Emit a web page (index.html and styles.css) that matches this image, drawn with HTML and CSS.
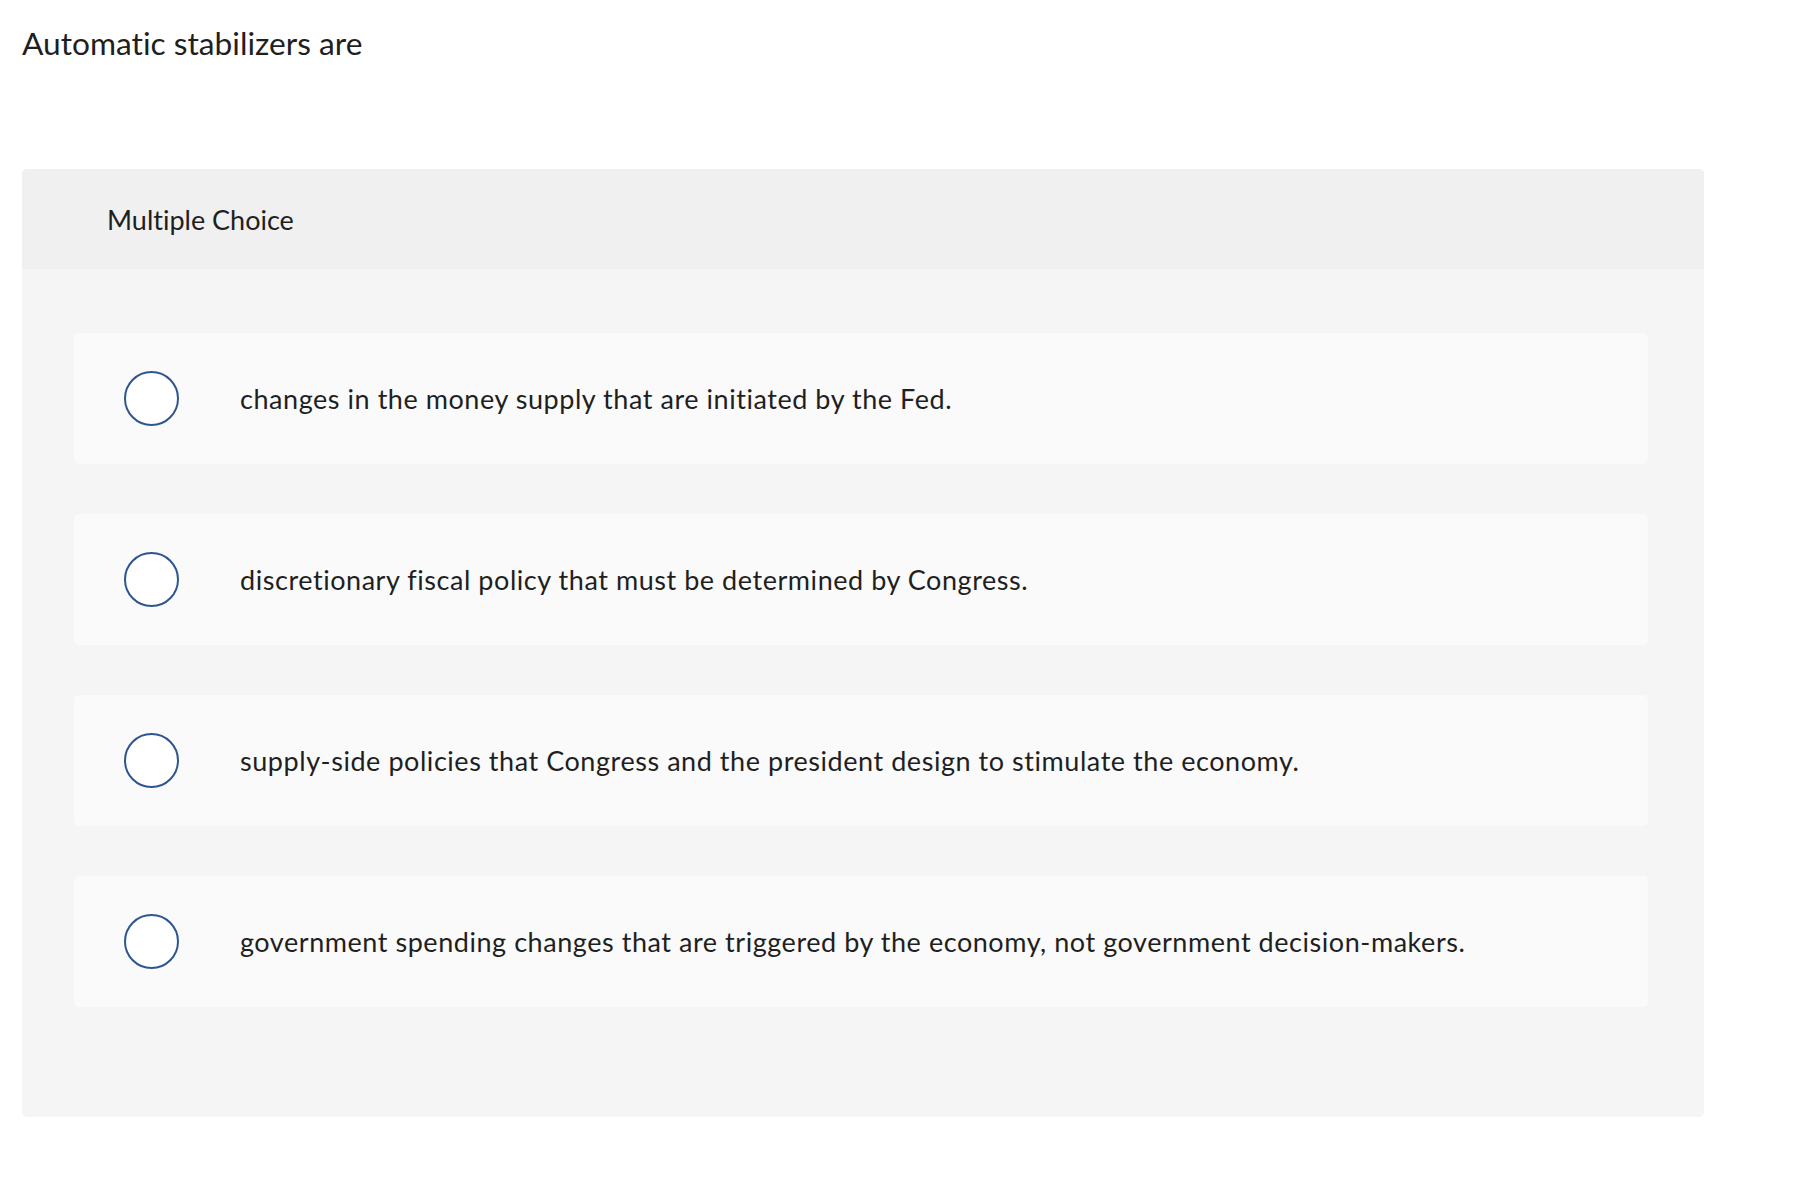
FILE: index.html
```html
<!DOCTYPE html>
<html>
<head>
<meta charset="utf-8">
<link rel="stylesheet" href="styles.css">
</head>
<body>
<div class="page">
  <h1 class="question">Automatic stabilizers are</h1>
  <div class="panel">
    <div class="panel-head">Multiple Choice</div>
    <div class="panel-body">
      <div class="option"><span class="radio"></span><span class="label">changes in the money supply that are initiated by the Fed.</span></div>
      <div class="option"><span class="radio"></span><span class="label">discretionary fiscal policy that must be determined by Congress.</span></div>
      <div class="option"><span class="radio"></span><span class="label">supply-side policies that Congress and the president design to stimulate the economy.</span></div>
      <div class="option"><span class="radio"></span><span class="label">government spending changes that are triggered by the economy, not government decision-makers.</span></div>
    </div>
  </div>
</div>
</body>
</html>
```
FILE: styles.css
```css
html, body {
  margin: 0;
  padding: 0;
  background: #ffffff;
}
body {
  font-family: "Lato", "Liberation Sans", sans-serif;
  color: #1f1f1f;
  font-variant-ligatures: none;
}
.page {
  padding: 0 112px 0 22px;
}
.question {
  margin: 0;
  padding-top: 24px;
  font-size: 31.7px;
  line-height: 38px;
  font-weight: 400;
  margin-bottom: 107px;
}
.panel {
  background: #f5f5f5;
  border-radius: 5px;
  overflow: hidden;
}
.panel-head {
  height: 100px;
  background: #f0f0f0;
  display: flex;
  align-items: center;
  padding-left: 85px;
  font-size: 27px;
}
.panel-body {
  display: flex;
  flex-direction: column;
  gap: 50px;
  padding: 64px 56px 110px 52px;
}
.option {
  height: 131px;
  background: #fafafa;
  border-radius: 5px;
  display: flex;
  align-items: center;
  padding-left: 50px;
}
.radio {
  width: 51px;
  height: 51px;
  border: 2.5px solid #2d5590;
  border-radius: 50%;
  background: #ffffff;
  flex: none;
}
.label {
  margin-left: 61px;
  font-size: 27px;
  letter-spacing: 0.55px;
}
```
